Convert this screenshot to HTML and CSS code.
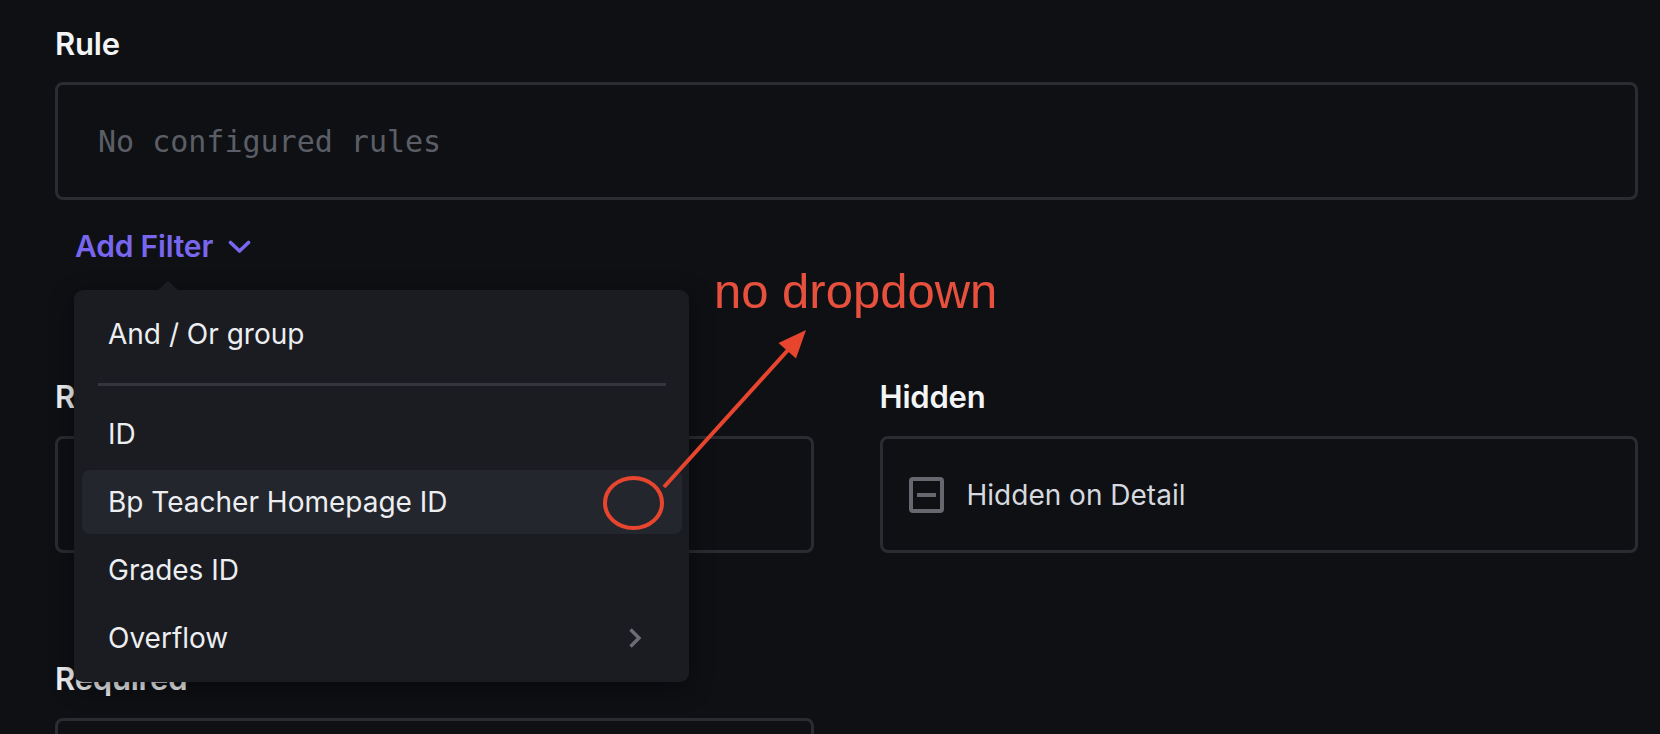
FILE: index.html
```html
<!DOCTYPE html>
<html lang="en">
<head>
<meta charset="utf-8">
<title>Rule filter</title>
<link rel="stylesheet" href="styles.css">
</head>
<body>
<div class="page">
  <section class="rule-section">
    <div class="label">Rule</div>
    <div class="rule-box"><span class="mono">No configured rules</span></div>
    <div class="filter-wrap">
      <button class="add-filter">Add Filter
        <svg class="chev-down" width="23" height="14" viewBox="0 0 23 14"><path d="M2.5 2.5 L11.5 11 L20.5 2.5" fill="none" stroke="currentColor" stroke-width="3.6" stroke-linecap="round" stroke-linejoin="round"/></svg>
      </button>
      <div class="menu">
        <div class="item">And / Or group</div>
        <div class="sep"></div>
        <div class="item">ID</div>
        <div class="item active">Bp Teacher Homepage ID</div>
        <div class="item">Grades ID</div>
        <div class="item has-sub">Overflow
          <svg class="chev-right" width="14" height="22" viewBox="0 0 14 22"><path d="M2.5 2.5 L11 11 L2.5 19.5" fill="none" stroke="currentColor" stroke-width="3.4" stroke-linejoin="miter"/></svg>
        </div>
      </div>
    </div>
  </section>

  <section class="grid">
    <div class="field">
      <div class="label">Readonly</div>
      <div class="field-box"></div>
    </div>
    <div class="field">
      <div class="label">Hidden</div>
      <div class="field-box"><span class="check"></span><span class="check-text">Hidden on Detail</span></div>
    </div>
    <div class="field">
      <div class="label">Required</div>
      <div class="field-box"></div>
    </div>
  </section>
</div>

<div class="annotation-text">no dropdown</div>
<svg class="annotation" width="1660" height="734" viewBox="0 0 1660 734">
  <ellipse cx="633.5" cy="503" rx="28.5" ry="25" fill="none" stroke="#e8452f" stroke-width="4"/>
  <line x1="664" y1="487" x2="788" y2="350" stroke="#e8452f" stroke-width="4"/>
  <polygon points="806,330 796,358.5 778.5,343" fill="#e8452f"/>
</svg>
</body>
</html>
```

FILE: styles.css
```css
* { box-sizing: border-box; }

html, body {
  margin: 0;
  background: #0e1014;
  width: 1660px;
  height: 734px;
  overflow: hidden;
}

body {
  font-family: "Inter", "Noto Sans", sans-serif;
  color: #eceef1;
  position: relative;
}

.page {
  padding: 25px 22px 0 55px;
}

.label {
  font-size: 31px;
  line-height: 38px;
  font-weight: 600;
  color: #f3f4f6;
  letter-spacing: -0.2px;
}

.rule-box {
  margin-top: 19px;
  height: 118px;
  border: 3px solid #2a2c31;
  border-radius: 8px;
  display: flex;
  align-items: center;
  padding-left: 40px;
}

.mono {
  font-family: "DejaVu Sans Mono", "Liberation Mono", monospace;
  font-size: 30px;
  color: #5b5e66;
}

.filter-wrap {
  position: relative;
  margin-top: 28px;
  height: 36px;
}

.add-filter {
  background: none;
  border: 0;
  padding: 0 0 0 20px;
  margin: 0;
  font-family: inherit;
  font-size: 30px;
  line-height: 36px;
  font-weight: 600;
  color: #7867ee;
  display: flex;
  align-items: center;
  gap: 15px;
  letter-spacing: -0.2px;
}

.chev-down { margin-top: 2px; }

.menu {
  position: absolute;
  left: 19px;
  top: 62px;
  width: 615px;
  height: 392px;
  background: #1a1c21;
  border-radius: 9px;
  padding: 12px 7px 12px 8px;
  display: flex;
  flex-direction: column;
  box-shadow: 0 6px 24px rgba(0, 0, 0, 0.45);
  z-index: 5;
}

.menu::before {
  content: "";
  position: absolute;
  left: 84px;
  top: -9px;
  width: 0;
  height: 0;
  border-left: 10px solid transparent;
  border-right: 10px solid transparent;
  border-bottom: 9px solid #1a1c21;
}

.item {
  height: 64px;
  flex: none;
  display: flex;
  align-items: center;
  padding: 0 40px 0 26px;
  font-size: 28px;
  color: #eceef1;
  border-radius: 8px;
  margin-bottom: 4px;
}

.item:last-child { margin-bottom: 0; }

.item.active { background: #23262d; }

.item.has-sub { justify-content: space-between; }

.chev-right { color: #6c6e76; }

.sep {
  height: 3px;
  margin: 13px 16px 16px;
  background: #33363c;
  flex: none;
}

.grid {
  margin-top: 114px;
  display: grid;
  grid-template-columns: 1fr 1fr;
  column-gap: 66px;
  row-gap: 107px;
}

.field .label { margin-bottom: 20px; }

.field-box {
  height: 117px;
  border: 3px solid #2a2c31;
  border-radius: 8px;
  display: flex;
  align-items: center;
  padding-left: 26px;
  gap: 23px;
}

.check {
  width: 35px;
  height: 36px;
  border: 4px solid #67686f;
  border-radius: 4px;
  position: relative;
  flex: none;
}

.check::after {
  content: "";
  position: absolute;
  left: 4px;
  right: 4px;
  top: 12px;
  height: 4px;
  background: #67686f;
}

.check-text {
  font-size: 28px;
  color: #d6d9df;
}

.annotation-text {
  position: absolute;
  left: 714px;
  top: 267px;
  font-family: "Liberation Sans", Arial, sans-serif;
  font-size: 49px;
  line-height: 1;
  color: #e8503e;
  z-index: 10;
}

.annotation {
  position: absolute;
  left: 0;
  top: 0;
  pointer-events: none;
  z-index: 10;
}
```
